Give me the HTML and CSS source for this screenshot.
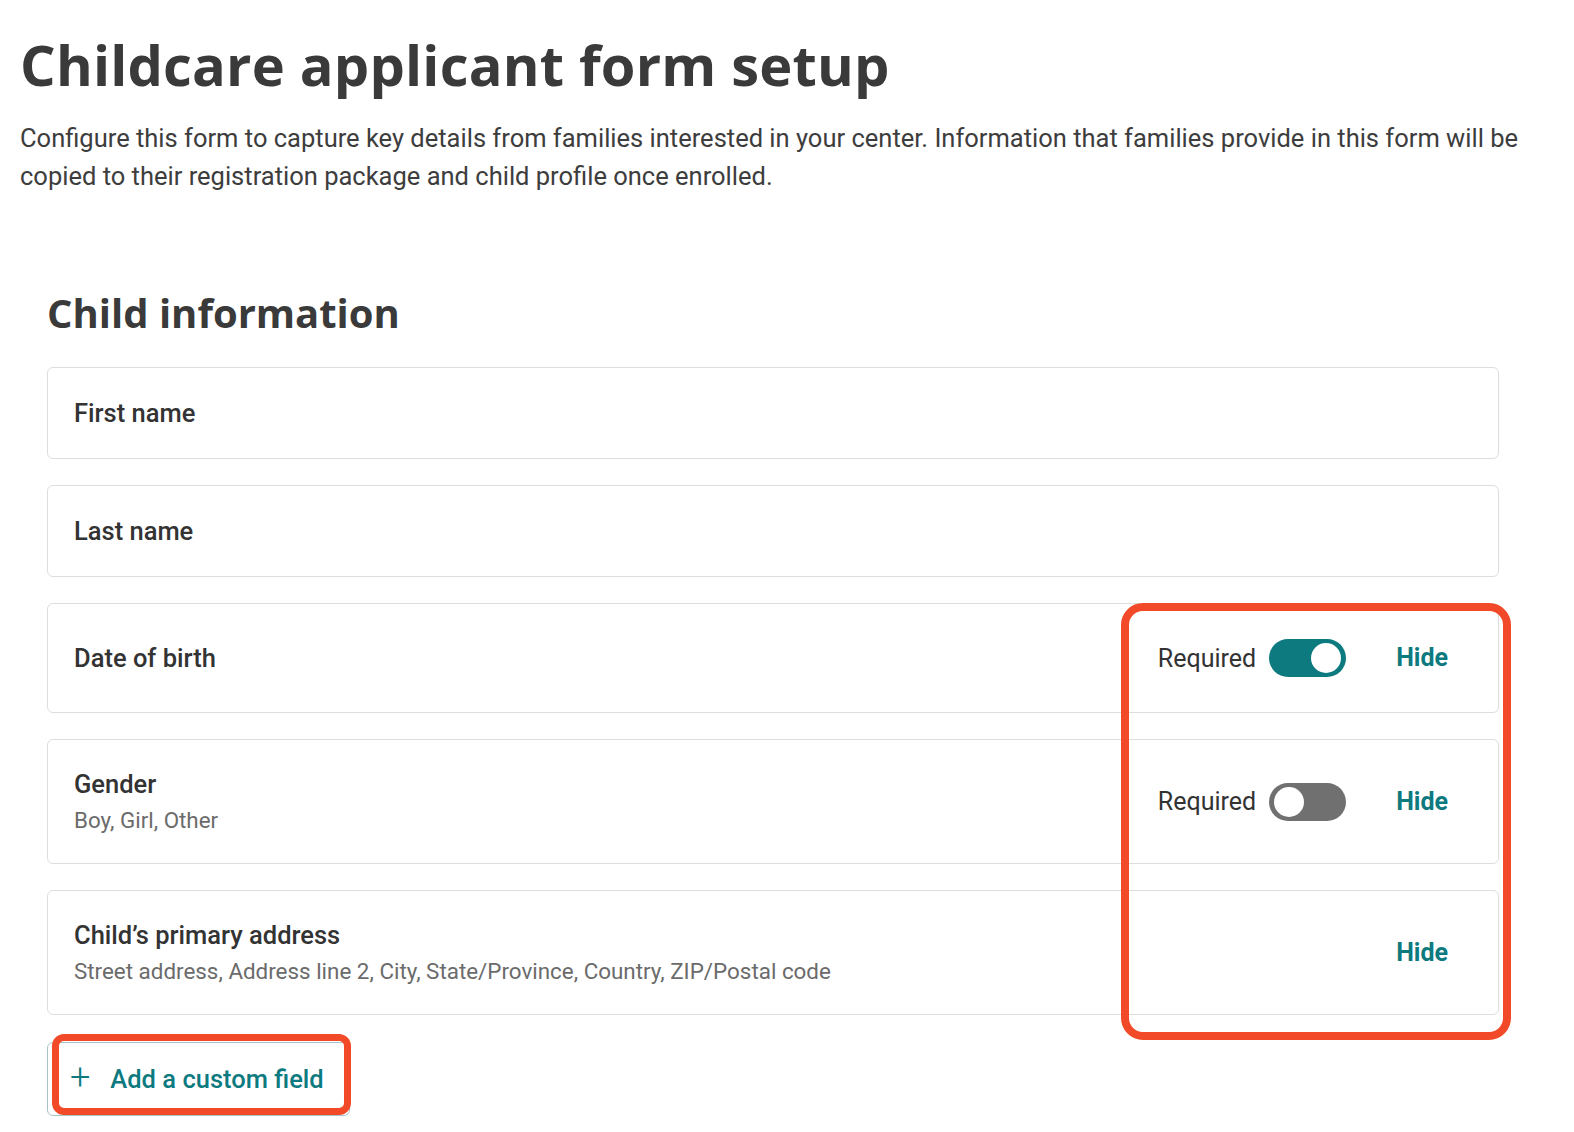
FILE: index.html
```html
<!DOCTYPE html>
<html lang="en">
<head>
  <meta charset="UTF-8" />
  <title>Childcare applicant form setup</title>
  <link rel="stylesheet" href="styles.css">
</head>
<body>
  <div class="page">
    <h1>Childcare applicant form setup</h1>
    <p class="intro">Configure this form to capture key details from families interested in your center. Information that families provide in this form will be copied to their registration package and child profile once enrolled.</p>

    <section class="section">
      <h2>Child information</h2>

      <div class="fields">
        <div class="field">
          <div class="field-text">
            <div class="field-name">First name</div>
          </div>
        </div>

        <div class="field">
          <div class="field-text">
            <div class="field-name">Last name</div>
          </div>
        </div>

        <div class="field">
          <div class="field-text">
            <div class="field-name">Date of birth</div>
          </div>
          <div class="field-actions">
            <label class="required">Required
              <span class="toggle on"><span class="knob"></span></span>
            </label>
            <button class="hide">Hide</button>
          </div>
        </div>

        <div class="field">
          <div class="field-text">
            <div class="field-name">Gender</div>
            <div class="field-desc">Boy, Girl, Other</div>
          </div>
          <div class="field-actions">
            <label class="required">Required
              <span class="toggle"><span class="knob"></span></span>
            </label>
            <button class="hide">Hide</button>
          </div>
        </div>

        <div class="field">
          <div class="field-text">
            <div class="field-name">Child’s primary address</div>
            <div class="field-desc">Street address, Address line 2, City, State/Province, Country, ZIP/Postal code</div>
          </div>
          <div class="field-actions">
            <button class="hide">Hide</button>
          </div>
        </div>

        <div class="mark mark-actions"></div>
      </div>

      <div class="add-wrap">
        <button class="add-field"><span class="plus">+</span>Add a custom field</button>
        <div class="mark mark-add"></div>
      </div>
    </section>
  </div>
</body>
</html>
```

FILE: styles.css
```css
* {
  margin: 0;
  padding: 0;
  box-sizing: border-box;
}

body {
  font-family: Roboto, "Liberation Sans", sans-serif;
  background: #fff;
  color: #333;
}

.page {
  width: 1506px;
  margin-left: 20px;
  padding-top: 28px;
}

h1 {
  font-family: "Open Sans", "Liberation Sans", sans-serif;
  font-weight: 700;
  font-size: 56px;
  line-height: 72px;
  color: #3a3a3a;
  letter-spacing: 0.2px;
}

.intro {
  margin-top: 19px;
  font-size: 25.5px;
  line-height: 38px;
  color: #3d3d3d;
}

.section {
  padding: 0 27px;
  margin-top: 92px;
}

h2 {
  font-family: "Open Sans", "Liberation Sans", sans-serif;
  font-weight: 700;
  font-size: 40px;
  line-height: 52px;
  color: #3a3a3a;
}

.fields {
  position: relative;
  margin-top: 28px;
  display: flex;
  flex-direction: column;
  gap: 26px;
}

.field {
  display: flex;
  align-items: center;
  justify-content: space-between;
  border: 1px solid #dedede;
  border-radius: 6px;
  padding: 30px 26px;
  min-height: 92px;
}

.field-name {
  font-size: 25.5px;
  line-height: 29px;
  font-weight: 500;
  color: #333;
}

.field-desc {
  margin-top: 8px;
  font-size: 22.4px;
  line-height: 26px;
  color: #6b6b6b;
}

.field-actions {
  display: flex;
  align-items: center;
  gap: 26px;
}

.required {
  display: flex;
  align-items: center;
  gap: 13px;
  font-size: 25px;
  color: #333;
}

.toggle {
  position: relative;
  width: 77px;
  height: 38px;
  border-radius: 19px;
  background: #707070;
}

.toggle.on {
  background: #0d7a7f;
}

.knob {
  position: absolute;
  top: 4px;
  left: 5px;
  width: 30px;
  height: 30px;
  border-radius: 50%;
  background: #fff;
}

.toggle.on .knob {
  left: auto;
  right: 5px;
}

.hide {
  font-family: Roboto, "Liberation Sans", sans-serif;
  font-size: 25px;
  line-height: 30px;
  font-weight: 700;
  color: #0d7a7f;
  background: none;
  border: none;
  padding: 9px 24px;
  cursor: pointer;
}

.add-wrap {
  position: relative;
  margin-top: 27px;
  display: inline-block;
}

.add-field {
  display: flex;
  align-items: center;
  font-family: Roboto, "Liberation Sans", sans-serif;
  font-size: 25.5px;
  font-weight: 500;
  color: #0d7a7f;
  background: #fff;
  border: 1px solid #a9c4c6;
  border-radius: 6px;
  height: 74px;
  padding: 0 25px 0 22px;
  cursor: pointer;
}

.plus {
  font-size: 36px;
  font-weight: 300;
  margin-right: 20px;
  line-height: 1;
  position: relative;
  top: -2px;
}

/* annotation outlines */
.mark {
  position: absolute;
  border: 8px solid #f24a28;
  pointer-events: none;
}

.mark-actions {
  left: 1074px;
  top: 236px;
  width: 390px;
  height: 437px;
  border-radius: 22px;
}

.mark-add {
  left: 5px;
  top: -8px;
  width: 299px;
  height: 81px;
  border-radius: 12px;
  border-width: 7px;
}
```
